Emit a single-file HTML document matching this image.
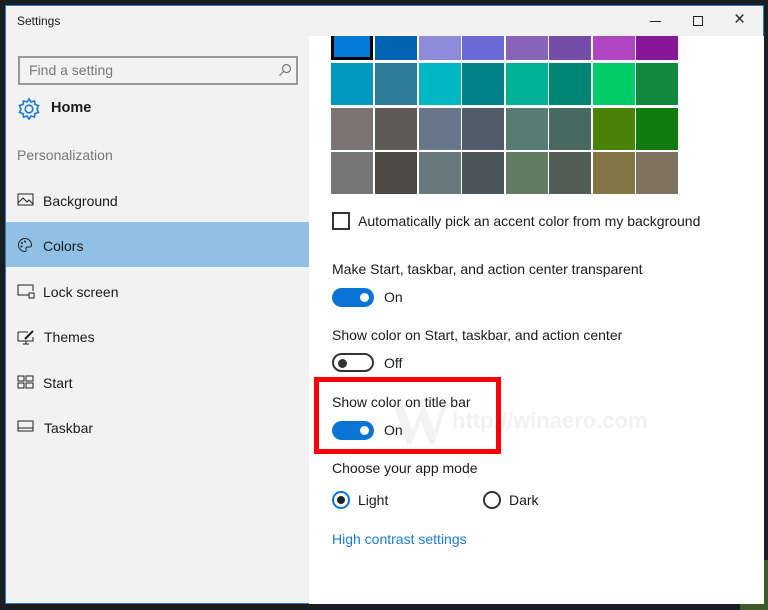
<!DOCTYPE html>
<html><head><style>
*{margin:0;padding:0;box-sizing:border-box}
body{width:768px;height:610px;background:#1b1d20;position:relative;overflow:hidden;font-family:"Liberation Sans",sans-serif;}
.win{position:absolute;left:5px;top:5px;width:759px;height:599px;border:1px solid #2b79c9;background:#f2f2f2}
.a{position:absolute}
.t{position:absolute;font-size:14px;color:#1a1a1a;white-space:nowrap}
.sw{position:absolute;width:42px;height:42px}
.tog{position:absolute;width:42px;height:19px;border-radius:10px;background:#0a74d6}
.tog::after{content:"";position:absolute;right:5px;top:5px;width:9px;height:9px;border-radius:50%;background:#fff}
.off{background:#fff;border:2px solid #333}
.off::after{left:4px;right:auto;top:3.5px;background:#333}
</style></head><body>
<div style="position:absolute;left:740px;top:560px;width:30px;height:50px;background:#3a5a2a"></div>
<div class="win">
<div class="t" style="left:11px;top:8px;font-size:12px">Settings</div>
<div class="a" style="left:644px;top:15px;width:11px;height:1px;background:#222"></div>
<div class="a" style="left:687px;top:10px;width:10px;height:10px;border:1px solid #222"></div>
<div class="t" style="left:728px;top:3px;font-size:19px;color:#222">×</div>
<div class="a" style="left:303px;top:30px;width:455px;height:568px;background:#fff"></div>
<div class="a" style="left:12px;top:50px;width:280px;height:29px;border:2px solid #999;background:#f2f2f2"></div>
<div class="t" style="left:23px;top:56px;color:#777">Find a setting</div>
<svg class="a" style="left:272px;top:57px" width="14" height="14"><circle cx="8.5" cy="5.5" r="4" fill="none" stroke="#777" stroke-width="1.2"/><line x1="5.5" y1="8.5" x2="1.5" y2="12.5" stroke="#777" stroke-width="1.2"/></svg>
<svg class="a" style="left:11px;top:91px" width="24" height="24" viewBox="0 0 24 24"><path d="M12 2l2 3 3.5-1 .5 3.5 3.5 1-1.5 3.5 1.5 3.5-3.5 1-.5 3.5-3.5-1-2 3-2-3-3.5 1-.5-3.5-3.5-1L4 12 2.5 8.5 6 7.5 6.5 4 10 5z" fill="none" stroke="#1a7bd6" stroke-width="1.6"/><circle cx="12" cy="12" r="3.8" fill="none" stroke="#1a7bd6" stroke-width="1.6"/></svg>
<div class="t" style="left:45px;top:94px;font-weight:bold;font-size:14.5px">Home</div>
<div class="t" style="left:11px;top:141px;color:#777">Personalization</div>
<div class="a" style="left:0;top:216px;width:303px;height:45px;background:#90c0e6"></div>
<svg class="a" style="left:11px;top:187px" width="18" height="14"><rect x="1" y="1" width="15" height="11" fill="none" stroke="#222"/><path d="M1 10l5-5 4 4 2-2 4 4" fill="none" stroke="#222"/></svg>
<div class="t" style="left:37px;top:187px">Background</div>
<svg class="a" style="left:11px;top:231px" width="16" height="16"><path d="M8 1.5a6.5 6.5 0 1 0 0 13c1.5 0 1.5-1.5 1-2.5s0-2 1.5-2H13a2 2 0 0 0 1.5-2.5A6.5 6.5 0 0 0 8 1.5z" fill="none" stroke="#222"/><circle cx="5" cy="6" r="1" fill="#222"/><circle cx="8" cy="4.5" r="1" fill="#222"/><circle cx="4.5" cy="9.5" r="1" fill="#222"/></svg>
<div class="t" style="left:37px;top:232px">Colors</div>
<svg class="a" style="left:11px;top:278px" width="18" height="16"><path d="M12 11H1V1h15v6" fill="none" stroke="#222"/><rect x="12" y="9" width="5" height="5" fill="none" stroke="#222"/></svg>
<div class="t" style="left:37px;top:278px">Lock screen</div>
<svg class="a" style="left:11px;top:323px" width="18" height="16"><path d="M1 3h10M1 3v9h15V8M6 15h6M9 12v3" fill="none" stroke="#222"/><path d="M8 10l8-8" stroke="#222" stroke-width="2"/></svg>
<div class="t" style="left:38px;top:323px">Themes</div>
<svg class="a" style="left:11px;top:369px" width="18" height="14"><rect x="1" y="1" width="6" height="5" fill="none" stroke="#222"/><rect x="9" y="1" width="7" height="5" fill="none" stroke="#222"/><rect x="1" y="8" width="6" height="5" fill="none" stroke="#222"/><rect x="9" y="8" width="7" height="5" fill="none" stroke="#222"/></svg>
<div class="t" style="left:37px;top:369px">Start</div>
<svg class="a" style="left:11px;top:414px" width="18" height="12"><rect x="1" y="1" width="15" height="10" fill="none" stroke="#222"/><line x1="1" y1="8" x2="16" y2="8" stroke="#222"/></svg>
<div class="t" style="left:38px;top:414px">Taskbar</div>

<div class="a" style="left:303px;top:30px;width:455px;height:568px;overflow:hidden">
<div style="position:absolute;left:0;top:0;width:455px;height:568px">
<div class="sw" style="left:22px;top:-18px;background:#0078d7;border:3px solid #000"></div>
<div class="sw" style="left:66px;top:-18px;background:#0063b1"></div>
<div class="sw" style="left:110px;top:-18px;background:#8e8cd8"></div>
<div class="sw" style="left:153px;top:-18px;background:#6b69d6"></div>
<div class="sw" style="left:197px;top:-18px;background:#8764b8"></div>
<div class="sw" style="left:240px;top:-18px;background:#744da9"></div>
<div class="sw" style="left:284px;top:-18px;background:#b146c2"></div>
<div class="sw" style="left:327px;top:-18px;background:#881798"></div>
<div class="sw" style="left:22px;top:27px;background:#0099bc"></div>
<div class="sw" style="left:66px;top:27px;background:#2d7d9a"></div>
<div class="sw" style="left:110px;top:27px;background:#00b7c3"></div>
<div class="sw" style="left:153px;top:27px;background:#038387"></div>
<div class="sw" style="left:197px;top:27px;background:#00b294"></div>
<div class="sw" style="left:240px;top:27px;background:#018574"></div>
<div class="sw" style="left:284px;top:27px;background:#00cc6a"></div>
<div class="sw" style="left:327px;top:27px;background:#10893e"></div>
<div class="sw" style="left:22px;top:72px;background:#7a7574"></div>
<div class="sw" style="left:66px;top:72px;background:#5d5a58"></div>
<div class="sw" style="left:110px;top:72px;background:#68768a"></div>
<div class="sw" style="left:153px;top:72px;background:#515c6b"></div>
<div class="sw" style="left:197px;top:72px;background:#567c73"></div>
<div class="sw" style="left:240px;top:72px;background:#486860"></div>
<div class="sw" style="left:284px;top:72px;background:#498205"></div>
<div class="sw" style="left:327px;top:72px;background:#107c10"></div>
<div class="sw" style="left:22px;top:116px;background:#767676"></div>
<div class="sw" style="left:66px;top:116px;background:#4c4a48"></div>
<div class="sw" style="left:110px;top:116px;background:#69797e"></div>
<div class="sw" style="left:153px;top:116px;background:#4a5459"></div>
<div class="sw" style="left:197px;top:116px;background:#647c64"></div>
<div class="sw" style="left:240px;top:116px;background:#525e54"></div>
<div class="sw" style="left:284px;top:116px;background:#847545"></div>
<div class="sw" style="left:327px;top:116px;background:#7e735f"></div>
</div>
</div>

<div class="a" style="left:326px;top:206px;width:18px;height:18px;border:2px solid #333"></div>
<div class="t" style="left:352px;top:207px">Automatically pick an accent color from my background</div>
<div class="t" style="left:326px;top:255px">Make Start, taskbar, and action center transparent</div>
<div class="tog" style="left:326px;top:282px"></div>
<div class="t" style="left:378px;top:283px">On</div>
<div class="t" style="left:326px;top:321px">Show color on Start, taskbar, and action center</div>
<div class="tog off" style="left:326px;top:347px"></div>
<div class="t" style="left:378px;top:349px">Off</div>
<div class="t" style="left:446px;top:402px;font-size:22px;font-weight:bold;color:#f2f2f2">http://winaero.com</div>
<div class="t" style="left:384px;top:384px;font-size:60px;font-weight:bold;color:#f3f3f3;font-family:'Liberation Serif',serif">W</div>
<div class="a" style="left:308px;top:371px;width:187px;height:77px;border:5px solid #f00"></div>
<div class="t" style="left:326px;top:388px">Show color on title bar</div>
<div class="tog" style="left:326px;top:415px"></div>
<div class="t" style="left:378px;top:416px">On</div>
<div class="t" style="left:326px;top:454px">Choose your app mode</div>
<div class="a" style="left:326px;top:485px;width:18px;height:18px;border:2px solid #0a74d6;border-radius:50%"></div>
<div class="a" style="left:331px;top:490px;width:8px;height:8px;background:#222;border-radius:50%"></div>
<div class="t" style="left:352px;top:486px">Light</div>
<div class="a" style="left:477px;top:485px;width:18px;height:18px;border:2px solid #333;border-radius:50%"></div>
<div class="t" style="left:503px;top:486px">Dark</div>
<div class="t" style="left:326px;top:525px;color:#1a7bd6">High contrast settings</div>
</div>
</body></html>
